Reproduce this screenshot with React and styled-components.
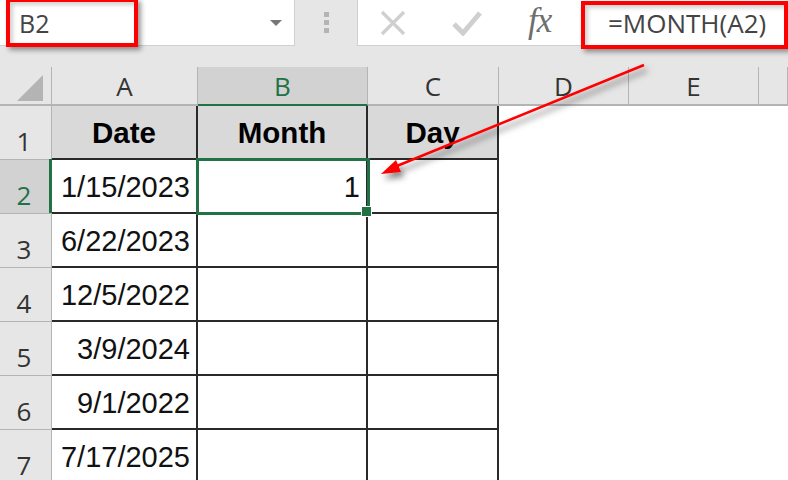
import React from 'react';
import styled, { createGlobalStyle } from 'styled-components';

const GlobalStyle = createGlobalStyle`
  html, body {
    margin: 0;
    padding: 0;
    background: #e6e6e6;
  }
`;

const Page = styled.div`
  position: relative;
  width: 788px;
  height: 480px;
  overflow: hidden;
  background: #e6e6e6;
  display: flex;
  flex-direction: column;
  font-family: "Liberation Sans", Arial, sans-serif;
`;

const FormulaBar = styled.div`
  height: 47px;
  margin-bottom: 20px;
  display: flex;
  flex: none;
`;

const NameBox = styled.div`
  width: 295px;
  height: 46px;
  box-sizing: border-box;
  background: #fff;
  border-right: 1px solid #d0d0d0;
  border-bottom: 1px solid #d0d0d0;
  display: flex;
  align-items: center;
  justify-content: space-between;
  padding: 0 12px 0 19px;
  font-family: "Open Sans", sans-serif;
  font-size: 25px;
  color: #444;
`;

const Caret = styled.span`
  width: 0;
  height: 0;
  border-left: 6px solid transparent;
  border-right: 6px solid transparent;
  border-top: 6px solid #777;
  margin-top: 1px;
`;

const Grip = styled.div`
  width: 62px;
  display: flex;
  flex-direction: column;
  align-items: center;
  justify-content: center;
  gap: 3px;
  padding-bottom: 3px;
  span {
    width: 5px;
    height: 5px;
    background: #b4b4b4;
  }
`;

const Buttons = styled.div`
  width: 224px;
  height: 46px;
  box-sizing: border-box;
  background: #fff;
  border-left: 1px solid #d0d0d0;
  border-bottom: 1px solid #d0d0d0;
  display: flex;
  align-items: center;
  padding-left: 22px;
  gap: 46px;
`;

const Fx = styled.span`
  font-family: "Liberation Serif", serif;
  font-style: italic;
  font-size: 35px;
  letter-spacing: -1px;
  color: #6e6e6e;
  margin-top: -3px;
`;

const Formula = styled.div`
  flex: 1;
  height: 46px;
  box-sizing: border-box;
  background: #fff;
  border-bottom: 1px solid #d0d0d0;
  padding-left: 27px;
  display: flex;
  align-items: center;
  font-family: "Open Sans", sans-serif;
  font-size: 26px;
  color: #444;
`;

const Sheet = styled.div`
  display: grid;
  grid-template-columns: 52px 146px 170px 131px 130px 130px 29px;
  grid-template-rows: 39px;
  grid-auto-rows: 54px;
`;

const Corner = styled.div`
  background: #e6e6e6;
  border-right: 1px solid #b4b4b4;
  border-bottom: 2px solid #b4b4b4;
  box-sizing: border-box;
  display: flex;
  align-items: flex-end;
  justify-content: flex-end;
  padding: 0 5px 3px 0;
`;

const ColHead = styled.div`
  box-sizing: border-box;
  display: flex;
  align-items: center;
  justify-content: center;
  font-family: "Open Sans", sans-serif;
  font-size: 26px;
  border-right: 1px solid #b4b4b4;
  background: ${p => (p.$active ? '#d2d2d2' : '#e6e6e6')};
  color: ${p => (p.$active ? '#217346' : '#333')};
  border-bottom: 2px solid ${p => (p.$active ? '#217346' : '#b4b4b4')};
`;

const RowHead = styled.div`
  box-sizing: border-box;
  display: flex;
  align-items: flex-end;
  justify-content: center;
  padding: 0 3px 0 0;
  font-family: "Open Sans", sans-serif;
  font-size: 26px;
  line-height: 35px;
  border-right: 1px solid #b4b4b4;
  border-bottom: 1px solid #b4b4b4;
  background: ${p => (p.$active ? '#d2d2d2' : '#e6e6e6')};
  color: ${p => (p.$active ? '#217346' : '#333')};
`;

const Cell = styled.div`
  box-sizing: border-box;
  display: flex;
  align-items: center;
  justify-content: flex-end;
  padding: 2px 6px 0 0;
  font-size: 29px;
  color: #111;
  background: #fff;
  border-right: 2px solid #2a2a2a;
  border-bottom: 2px solid #2a2a2a;
  white-space: nowrap;
`;

const HeadCell = styled(Cell)`
  background: #d9d9d9;
  justify-content: center;
  padding: 2px 0 0;
  font-weight: bold;
  font-size: 29.5px;
  color: #000;
`;

const EmptyCell = styled.div`
  background: #fff;
`;

const Selection = styled.div`
  position: absolute;
  left: 196px;
  top: 158px;
  width: 174px;
  height: 57px;
  box-sizing: border-box;
  border: 3px solid #217346;
`;

const Handle = styled.div`
  position: absolute;
  right: -5px;
  bottom: -5px;
  width: 9px;
  height: 9px;
  background: #217346;
  border: 1px solid #fff;
`;

const ActiveRowEdge = styled.div`
  position: absolute;
  left: 49px;
  top: 159px;
  width: 3px;
  height: 54px;
  background: #217346;
`;

const Callout = styled.div`
  position: absolute;
  left: ${p => p.$left}px;
  top: ${p => p.$top}px;
  width: ${p => p.$width}px;
  height: ${p => p.$height}px;
  box-sizing: border-box;
  border: 4px solid #fe0000;
  box-shadow: 3px 3px 5px rgba(0, 0, 0, 0.4), inset 3px 3px 4px rgba(0, 0, 0, 0.18);
`;

const ArrowLayer = styled.svg`
  position: absolute;
  left: 0;
  top: 0;
`;

const dates = ['1/15/2023', '6/22/2023', '12/5/2022', '3/9/2024', '9/1/2022', '7/17/2025'];
const columns = ['A', 'B', 'C', 'D', 'E', ''];

const App = () => (
  <Page>
    <GlobalStyle />
    <FormulaBar>
      <NameBox>
        B2
        <Caret />
      </NameBox>
      <Grip>
        <span />
        <span />
        <span />
      </Grip>
      <Buttons>
        <svg width="26" height="26" viewBox="0 0 26 26">
          <path d="M2 2 L24 24 M24 2 L2 24" stroke="#cfcfcf" strokeWidth="3.2" fill="none" />
        </svg>
        <svg width="30" height="26" viewBox="0 0 30 26">
          <path d="M2 14 L11 23 L28 3" stroke="#cfcfcf" strokeWidth="5" fill="none" />
        </svg>
        <Fx>fx</Fx>
      </Buttons>
      <Formula>=MONTH(A2)</Formula>
    </FormulaBar>

    <Sheet>
      <Corner>
        <svg width="29" height="26" viewBox="0 0 29 26">
          <path d="M0 26 L26 0 L26 26 Z" fill="#b4b4b4" />
        </svg>
      </Corner>
      {columns.map((c, i) => (
        <ColHead key={i} $active={c === 'B'}>{c}</ColHead>
      ))}

      <RowHead>1</RowHead>
      <HeadCell>Date</HeadCell>
      <HeadCell>Month</HeadCell>
      <HeadCell>Day</HeadCell>
      <EmptyCell />
      <EmptyCell />
      <EmptyCell />

      {dates.map((d, i) => (
        <React.Fragment key={d}>
          <RowHead $active={i === 0}>{i + 2}</RowHead>
          <Cell>{d}</Cell>
          <Cell>{i === 0 ? '1' : ''}</Cell>
          <Cell />
          <EmptyCell />
          <EmptyCell />
          <EmptyCell />
        </React.Fragment>
      ))}
    </Sheet>

    <ActiveRowEdge />
    <Selection>
      <Handle />
    </Selection>
    <Callout $left={6} $top={-2} $width={132} $height={49} />
    <Callout $left={581} $top={1} $width={207} $height={48} />

    <ArrowLayer width="788" height="480" viewBox="0 0 788 480">
      <defs>
        <filter id="arrowShadow" x="-10%" y="-10%" width="120%" height="130%">
          <feDropShadow dx="3" dy="5" stdDeviation="3" floodColor="#000" floodOpacity="0.5" />
        </filter>
      </defs>
      <g filter="url(#arrowShadow)">
        <path d="M644 65 L392 168" stroke="#fe0000" strokeWidth="2.5" fill="none" />
        <path d="M381 174 L396 160 L401 172 Z" fill="#fe0000" />
      </g>
    </ArrowLayer>
  </Page>
);

export default App;
